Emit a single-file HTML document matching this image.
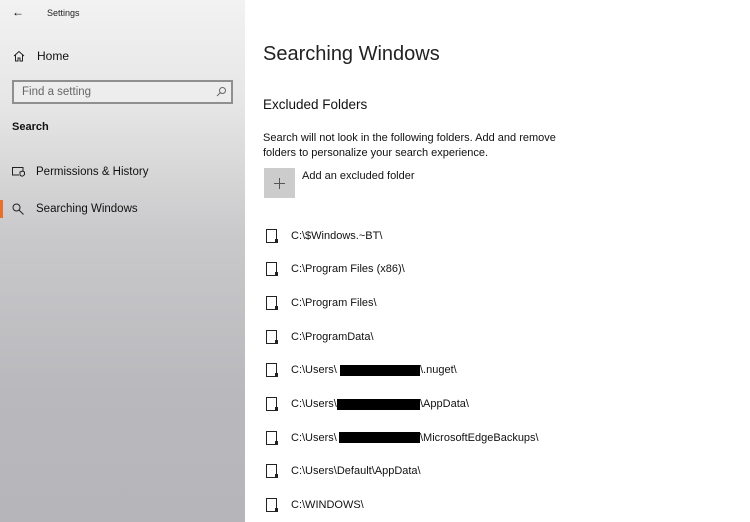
<!DOCTYPE html>
<html><head><meta charset="utf-8"><style>
*{margin:0;padding:0;box-sizing:border-box}
body{width:750px;height:522px;overflow:hidden;background:#fff;font-family:"Liberation Sans",sans-serif;color:#000;position:relative}
.sb{position:absolute;left:0;top:0;width:245px;height:522px;background:linear-gradient(180deg,#f2f2f2 0%,#e6e6e6 20%,#c9c9cb 45%,#b9b9bd 75%,#b6b6ba 100%)}
.a{position:absolute;white-space:nowrap}
.t{font-size:11px;color:#111}
.ic{position:absolute;left:266px;width:11px;height:14px;border:1px solid #222;border-right-width:1.5px}
.ic::after{content:"";position:absolute;right:-2px;bottom:-1px;width:3px;height:4px;background:#222}
.blk{position:absolute;background:#000;height:11px}
</style></head><body>
<div class="sb"></div>
<div class="a" style="left:12px;top:5px;font-size:12px">&#8592;</div>
<div class="a" style="left:47px;top:8px;font-size:9px;color:#222">Settings</div>
<svg class="a" style="left:13px;top:50px" width="12" height="12" viewBox="0 0 12 12" fill="none" stroke="#222" stroke-width="1"><path d="M1 6 L6 1.5 L11 6 M2.5 5 V11 H5 V8 H7 V11 H9.5 V5"/></svg>
<div class="a" style="left:37px;top:49px;font-size:12px;color:#111">Home</div>
<div class="a" style="left:12px;top:80px;width:221px;height:24px;border:2px solid #8f8f8f;background:#ededed"></div>
<div class="a" style="left:22px;top:86px;font-size:11.5px;color:#666">Find a setting</div>
<svg class="a" style="left:216px;top:86px" width="11" height="11" viewBox="0 0 11 11" fill="none" stroke="#666"><circle cx="6.5" cy="4.5" r="3"/><path d="M4.5 6.5 L1 10"/></svg>
<div class="a" style="left:12px;top:121px;font-size:11px;font-weight:bold;color:#111">Search</div>
<svg class="a" style="left:12px;top:167px" width="13" height="11" viewBox="0 0 13 11" fill="none" stroke="#222"><path d="M7 8 H0.5 V0.5 H11 V4"/><path d="M8 5 L10.5 4 L12.5 5 V7.5 Q10.5 10.5 8 8 Z"/></svg>
<div class="a" style="left:36px;top:166px;font-size:11.5px;color:#111">Permissions &amp; History</div>
<div class="a" style="left:0;top:200px;width:3px;height:18px;background:#e8702a"></div>
<svg class="a" style="left:12px;top:203px" width="12" height="12" viewBox="0 0 12 12" fill="none" stroke="#222"><circle cx="4.5" cy="4.5" r="3.5"/><path d="M7 7 L11.5 11.5"/></svg>
<div class="a" style="left:36px;top:203px;font-size:11.5px;color:#111">Searching Windows</div>

<div class="a" style="left:263px;top:43px;font-size:20px;color:#222">Searching Windows</div>
<div class="a" style="left:263px;top:97px;font-size:13.5px;color:#111">Excluded Folders</div>
<div class="a t" style="left:263px;top:131px;line-height:15px">Search will not look in the following folders. Add and remove<br>folders to personalize your search experience.</div>
<div class="a" style="left:264px;top:168px;width:31px;height:30px;background:#ccc"></div>
<div class="a" style="left:274px;top:183px;width:11px;height:1px;background:#555"></div>
<div class="a" style="left:279px;top:178px;width:1px;height:11px;background:#555"></div>
<div class="a t" style="left:302px;top:170px">Add an excluded folder</div>

<div class="ic" style="top:229px"></div><div class="a t" style="left:291px;top:230px">C:\$Windows.~BT\</div>
<div class="ic" style="top:262px"></div><div class="a t" style="left:291px;top:263px">C:\Program Files (x86)\</div>
<div class="ic" style="top:296px"></div><div class="a t" style="left:291px;top:297px">C:\Program Files\</div>
<div class="ic" style="top:330px"></div><div class="a t" style="left:291px;top:331px">C:\ProgramData\</div>
<div class="ic" style="top:363px"></div><div class="a t" style="left:291px;top:364px">C:\Users\</div><div class="blk" style="left:340px;top:365px;width:80px"></div><div class="a t" style="left:420px;top:364px">\.nuget\</div>
<div class="ic" style="top:397px"></div><div class="a t" style="left:291px;top:398px">C:\Users\</div><div class="blk" style="left:337px;top:399px;width:83px"></div><div class="a t" style="left:420px;top:398px">\AppData\</div>
<div class="ic" style="top:431px"></div><div class="a t" style="left:291px;top:432px">C:\Users\</div><div class="blk" style="left:339px;top:432px;width:81px"></div><div class="a t" style="left:420px;top:432px">\MicrosoftEdgeBackups\</div>
<div class="ic" style="top:464px"></div><div class="a t" style="left:291px;top:465px">C:\Users\Default\AppData\</div>
<div class="ic" style="top:498px"></div><div class="a t" style="left:291px;top:499px">C:\WINDOWS\</div>
</body></html>
